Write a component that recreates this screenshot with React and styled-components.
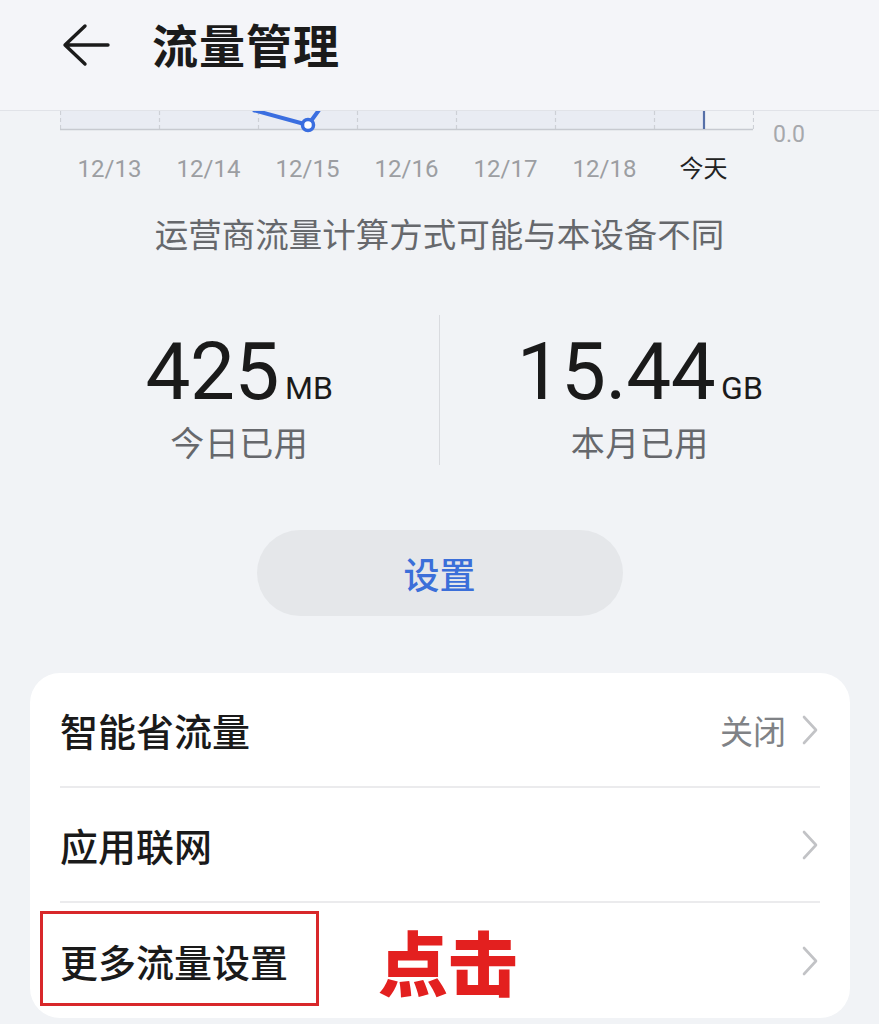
import React from "react";
import styled, { createGlobalStyle } from "styled-components";

const GlobalStyle = createGlobalStyle`
  html, body {
    margin: 0;
    padding: 0;
    background: #f1f3f6;
  }
  body {
    font-family: Roboto, "Noto Sans CJK SC", "Noto Sans", sans-serif;
    -webkit-font-smoothing: antialiased;
  }
`;

const Page = styled.div`
  width: 879px;
  height: 1024px;
  overflow: hidden;
  background: #f1f3f6;
`;

const Header = styled.header`
  height: 111px;
  display: flex;
  align-items: center;
  padding-left: 58px;
  padding-bottom: 24px;
  box-sizing: border-box;
  background: #f4f5f9;
  border-bottom: 1px solid #e1e3e8;
`;

const BackButton = styled.button`
  display: flex;
  align-items: center;
  justify-content: center;
  width: 56px;
  height: 50px;
  padding: 0;
  border: none;
  background: transparent;
  margin-right: 38px;
  margin-top: 4px;
`;

const Title = styled.h1`
  margin: 0;
  font-family: "Noto Sans CJK SC", sans-serif;
  font-size: 46px;
  font-weight: 700;
  color: #1b1b1b;
  letter-spacing: 1px;
`;

const ChartRow = styled.div`
  display: flex;
  align-items: flex-start;
  padding-left: 60px;
  height: 22px;
`;

const AxisValue = styled.span`
  font-family: Roboto, sans-serif;
  font-size: 23px;
  color: #a6a8ac;
  margin-left: 19px;
  margin-top: 12px;
  line-height: 1;
`;

const DateRow = styled.div`
  display: grid;
  grid-template-columns: repeat(7, 99px);
  padding-left: 60px;
  margin-top: 21px;
`;

const DateLabel = styled.span`
  text-align: center;
  font-family: Roboto, "Noto Sans CJK SC", sans-serif;
  font-size: 24px;
  line-height: 30px;
  color: ${(p) => (p.$today ? "#222" : "#9c9ea2")};
`;

const Notice = styled.p`
  margin: 29px 0 0;
  text-align: center;
  font-family: "Noto Sans CJK SC", sans-serif;
  font-size: 33.5px;
  line-height: 40px;
  color: #66686c;
`;

const Stats = styled.div`
  display: grid;
  grid-template-columns: 1fr 1px 1fr;
  width: 800px;
  margin: 62px auto 0;
  height: 150px;
`;

const Stat = styled.div`
  display: flex;
  flex-direction: column;
  align-items: center;
  padding-top: 17px;
`;

const Divider = styled.div`
  background: #d9dbdf;
`;

const Amount = styled.div`
  display: flex;
  align-items: baseline;
  font-family: Roboto, sans-serif;
  color: #1a1a1a;
  line-height: 80px;
`;

const Number = styled.span`
  font-size: 80px;
  font-weight: 400;
  letter-spacing: -0.5px;
`;

const Unit = styled.span`
  font-size: 32px;
  margin-left: 6px;
`;

const StatLabel = styled.div`
  margin-top: -8px;
  font-family: "Noto Sans CJK SC", sans-serif;
  font-size: 34px;
  line-height: 44px;
  color: #66686c;
  letter-spacing: 0.5px;
`;

const SetButton = styled.button`
  display: block;
  width: 366px;
  height: 86px;
  margin: 65px auto 0;
  border: none;
  border-radius: 43px;
  background: #e5e7ea;
  font-family: "Noto Sans CJK SC", sans-serif;
  font-size: 36px;
  font-weight: 500;
  color: #3b6fd9;
`;

const Card = styled.section`
  margin: 57px 29px 0 30px;
  background: #ffffff;
  border-radius: 30px;
  padding: 0 30px;
`;

const Row = styled.div`
  position: relative;
  display: flex;
  align-items: center;
  height: 115px;
  border-bottom: ${(p) => (p.$last ? "none" : "2px solid #ebebed")};
  box-sizing: border-box;
`;

const RowTitle = styled.span`
  flex: 1;
  font-family: "Noto Sans CJK SC", sans-serif;
  font-size: 38px;
  font-weight: 500;
  color: #1a1a1a;
`;

const RowValue = styled.span`
  font-family: "Noto Sans CJK SC", sans-serif;
  font-size: 33px;
  color: #808286;
  margin-right: 14px;
`;

const Highlight = styled.div`
  position: absolute;
  left: -20px;
  top: 8px;
  width: 279px;
  height: 95px;
  border: 3px solid #d8282a;
  box-sizing: border-box;
`;

const Hint = styled.span`
  position: absolute;
  left: 318px;
  top: 18px;
  font-family: "Noto Sans CJK SC", sans-serif;
  font-size: 70px;
  font-weight: 900;
  line-height: 80px;
  color: #e3201f;
`;

const BackArrow = () => (
  <svg width="50" height="44" viewBox="0 0 50 44" fill="none">
    <path
      d="M47 22H5M24 3L4 22l20 19"
      stroke="#1b1b1b"
      strokeWidth="3.4"
      strokeLinecap="round"
      strokeLinejoin="round"
    />
  </svg>
);

const Chevron = () => (
  <svg width="20" height="34" viewBox="0 0 20 34" fill="none">
    <path
      d="M4 4l12 13L4 30"
      stroke="#c2c3c6"
      strokeWidth="2.6"
      strokeLinecap="round"
      strokeLinejoin="round"
    />
  </svg>
);

const gridX = [0, 99, 198, 297, 396, 495, 594, 693];

const UsageChart = () => (
  <svg width="694" height="22" viewBox="0 0 694 22">
    <rect x="0" y="0" width="644" height="18" fill="#e9ecf3" />
    {gridX.map((x) => (
      <line
        key={x}
        x1={x + 0.5}
        y1="0"
        x2={x + 0.5}
        y2="18"
        stroke="#cdd0d6"
        strokeWidth="1.2"
        strokeDasharray="4 3"
      />
    ))}
    <line x1="0" y1="18.5" x2="693" y2="18.5" stroke="#c7cad0" strokeWidth="1.6" />
    <line x1="644" y1="0" x2="644" y2="18" stroke="#5670a8" strokeWidth="2.2" />
    <polyline
      points="193,-1 248,14 259,-1"
      fill="none"
      stroke="#3a6ee0"
      strokeWidth="4"
      strokeLinejoin="round"
    />
    <circle cx="248" cy="14" r="5.5" fill="#fff" stroke="#3a6ee0" strokeWidth="3.5" />
  </svg>
);

const dates = ["12/13", "12/14", "12/15", "12/16", "12/17", "12/18", "今天"];

const rows = [
  { title: "智能省流量", value: "关闭" },
  { title: "应用联网" },
  { title: "更多流量设置", highlight: true },
];

export default function App() {
  return (
    <>
      <GlobalStyle />
      <Page>
        <Header>
          <BackButton>
            <BackArrow />
          </BackButton>
          <Title>流量管理</Title>
        </Header>

        <ChartRow>
          <UsageChart />
          <AxisValue>0.0</AxisValue>
        </ChartRow>

        <DateRow>
          {dates.map((d, i) => (
            <DateLabel key={d} $today={i === dates.length - 1}>
              {d}
            </DateLabel>
          ))}
        </DateRow>

        <Notice>运营商流量计算方式可能与本设备不同</Notice>

        <Stats>
          <Stat>
            <Amount>
              <Number>425</Number>
              <Unit>MB</Unit>
            </Amount>
            <StatLabel>今日已用</StatLabel>
          </Stat>
          <Divider />
          <Stat>
            <Amount>
              <Number>15.44</Number>
              <Unit>GB</Unit>
            </Amount>
            <StatLabel>本月已用</StatLabel>
          </Stat>
        </Stats>

        <SetButton>设置</SetButton>

        <Card>
          {rows.map((r, i) => (
            <Row key={r.title} $last={i === rows.length - 1}>
              <RowTitle>{r.title}</RowTitle>
              {r.value && <RowValue>{r.value}</RowValue>}
              <Chevron />
              {r.highlight && (
                <>
                  <Highlight />
                  <Hint>点击</Hint>
                </>
              )}
            </Row>
          ))}
        </Card>
      </Page>
    </>
  );
}
